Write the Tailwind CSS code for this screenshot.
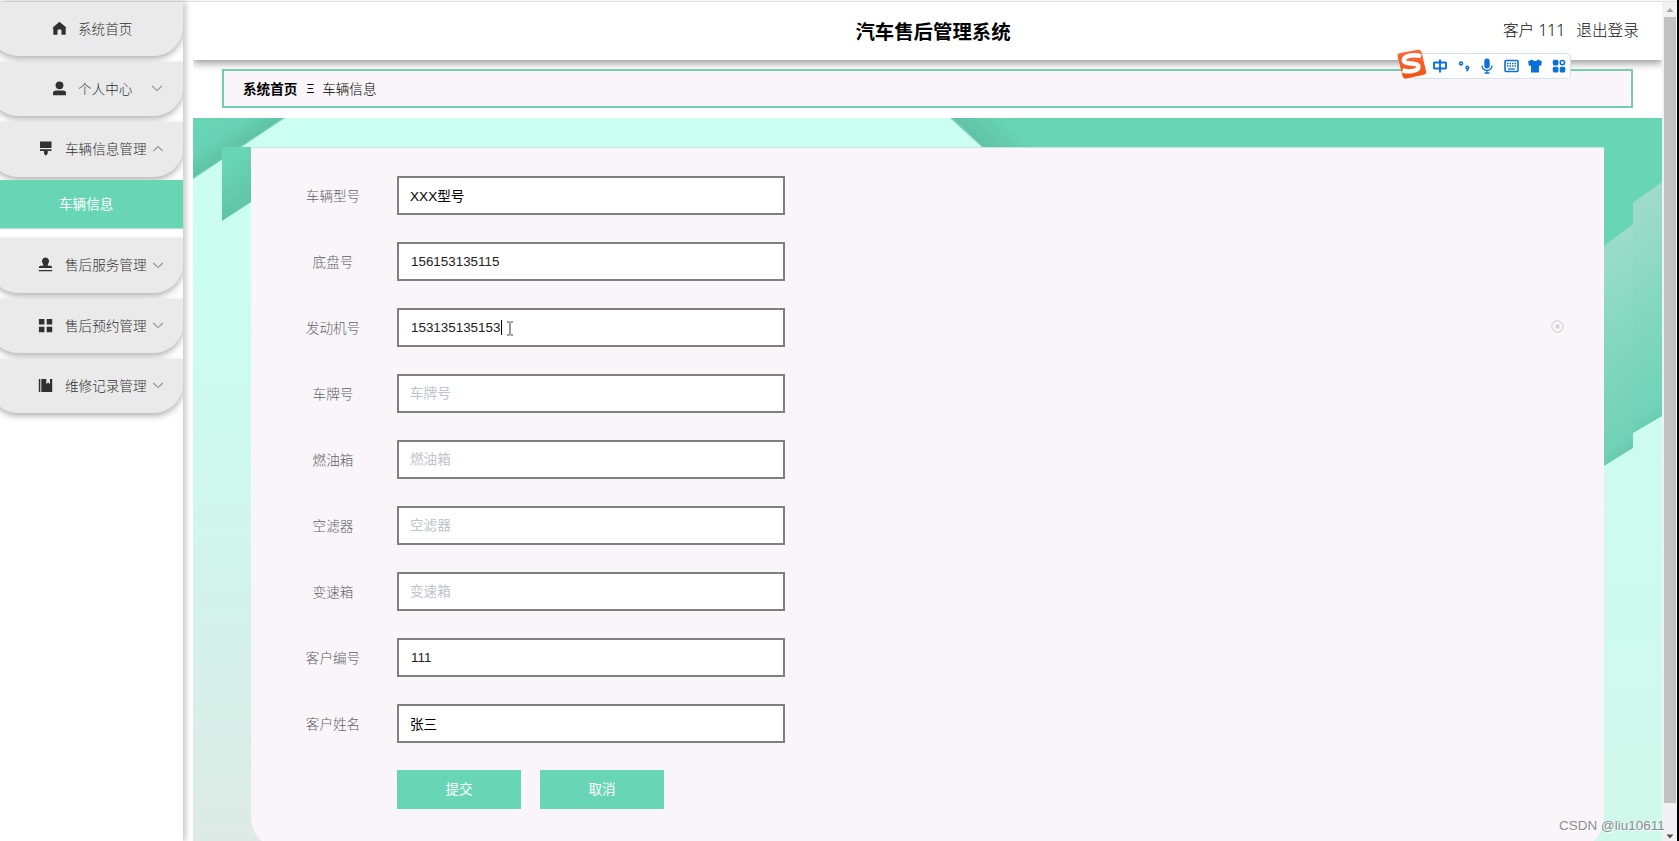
<!DOCTYPE html>
<html lang="zh">
<head>
  <meta charset="utf-8">
  <title>汽车售后管理系统</title>
  <meta name="viewport" content="width=device-width, initial-scale=1">
  <script src="https://cdn.jsdelivr.net/npm/@tailwindcss/browser@4"></script>
</head>

<body class="flex h-[841px] w-[1679px] overflow-hidden bg-white font-['Noto_Sans_CJK_SC',sans-serif] text-[13.6px] text-[#303133]">

  <!-- sidebar -->
  <aside class="relative z-10 mt-[2px] h-[839px] w-[183px] shrink-0 bg-white shadow-[3px_0_6px_rgba(0,0,0,0.22)]">
    <nav class="h-full overflow-hidden font-light">
      <div class="-ml-[11px] flex h-[54px] items-center rounded-b-[29px] bg-[#eaeaea] pb-[2px] pl-[63px] shadow-[0_3px_6px_rgba(0,0,0,0.3)]">
        <svg class="h-[15px] w-[15px]" viewBox="0 0 15 15" fill="#303133"><path d="M7.500.8 14.200 6.400V7.300H13.700V13.700H9.500V9.400a1 1 0 0 0-1-1h-2a1 1 0 0 0-1 1v4.300H1.300V7.300H.8V6.400z"/></svg>
        <span class="ml-[11px]">系统首页</span>
      </div>

      <div class="-ml-[11px] mt-[6px] flex h-[54px] items-center rounded-b-[29px] bg-[#eaeaea] pb-[2px] pl-[63px] shadow-[0_3px_6px_rgba(0,0,0,0.3)]">
        <svg class="h-[15px] w-[15px]" viewBox="0 0 15 15" fill="#303133"><circle cx="7.500" cy="4.300" r="3.900"/><path d="M1 14.300v-2.300Q1 9.500 4 9.500h7q3 0 3 2.500v2.300z"/></svg>
        <span class="ml-[11px]">个人中心</span>
        <svg class="ml-[19px] h-[10px] w-[12px]" viewBox="0 0 12 10" fill="none" stroke="#909399" stroke-width="1.100"><path d="M1.200 3 6 7.600 10.800 3"/></svg>
      </div>

      <div class="-ml-[11px] mt-[6px] flex h-[55px] items-center rounded-b-[29px] bg-[#eaeaea] pb-[2px] pl-[49px] shadow-[0_3px_6px_rgba(0,0,0,0.3)]">
        <svg class="h-[15px] w-[15px]" viewBox="0 0 15 15" fill="#303133"><path d="M2 .5h11.500V7H2zM2 8.200h11.500v1.700H9.700v2.900L7.800 14.800 6 12.800V9.900H2z"/></svg>
        <span class="ml-[12px]">车辆信息管理</span>
        <svg class="ml-[5px] h-[10px] w-[12px]" viewBox="0 0 12 10" fill="none" stroke="#909399" stroke-width="1.100"><path d="M1.200 7.200 6 2.600 10.800 7.200"/></svg>
      </div>

      <div class="relative mt-[3px] flex h-[49px] items-center border-b border-[#a9e5d3] bg-[#68d5b5] pb-[2px] pl-[59px] font-normal text-white">车辆信息</div>

      <div class="-ml-[11px] mt-[9px] flex h-[55px] items-center rounded-b-[29px] bg-[#eaeaea] pb-[2px] pl-[49px] shadow-[0_3px_6px_rgba(0,0,0,0.3)]">
        <svg class="h-[15px] w-[15px]" viewBox="0 0 15 15" fill="#303133"><path d="M7.500.6a3.500 3.500 0 0 1 3 5.400c-.6 1-.9 1.800-.8 2.800h2.800q1.700 0 1.700 2.200H.800q0-2.200 1.700-2.200h2.800c.1-1-.2-1.800-.8-2.800a3.500 3.500 0 0 1 3-5.400zM.8 12.900h13.400V14.200H.8z"/></svg>
        <span class="ml-[12px]">售后服务管理</span>
        <svg class="ml-[5px] h-[10px] w-[12px]" viewBox="0 0 12 10" fill="none" stroke="#909399" stroke-width="1.100"><path d="M1.200 3 6 7.600 10.800 3"/></svg>
      </div>

      <div class="-ml-[11px] mt-[6px] flex h-[54px] items-center rounded-b-[29px] bg-[#eaeaea] pb-[2px] pl-[49px] shadow-[0_3px_6px_rgba(0,0,0,0.3)]">
        <svg class="h-[15px] w-[15px]" viewBox="0 0 15 15" fill="#303133"><path d="M.9 1h5.500v5.500H.9zM8.700 1h5.500v5.500H8.700zM.9 8.700h5.500v5.500H.9zM8.700 8.700h5.500v5.500H8.700z"/></svg>
        <span class="ml-[12px]">售后预约管理</span>
        <svg class="ml-[5px] h-[10px] w-[12px]" viewBox="0 0 12 10" fill="none" stroke="#909399" stroke-width="1.100"><path d="M1.200 3 6 7.600 10.800 3"/></svg>
      </div>

      <div class="-ml-[11px] mt-[6px] flex h-[54px] items-center rounded-b-[29px] bg-[#eaeaea] pb-[2px] pl-[49px] shadow-[0_3px_6px_rgba(0,0,0,0.3)]">
        <svg class="h-[15px] w-[15px]" viewBox="0 0 15 15" fill="#303133"><path d="M.8 1h1.500v13H.8zM3.300 1h5v5l1.900-1.500L12 6V1h2.200v13H3.300z"/></svg>
        <span class="ml-[12px]">维修记录管理</span>
        <svg class="ml-[5px] h-[10px] w-[12px]" viewBox="0 0 12 10" fill="none" stroke="#909399" stroke-width="1.100"><path d="M1.200 3 6 7.600 10.800 3"/></svg>
      </div>
    </nav>
  </aside>

  <div class="ml-[10px] flex w-[1469px] shrink-0 flex-col overflow-hidden pt-[2px]">
    <header class="grid h-[58px] shrink-0 grid-cols-3 items-center bg-white pr-[23px] text-black shadow-[0_3px_8px_rgba(0,0,0,0.42)]">
      <div></div>
      <h1 class="pl-[34px] pb-px text-center text-[19.4px] font-bold">汽车售后管理系统</h1>
      <div class="flex justify-end gap-[11px] font-['Noto_Sans','Noto_Sans_CJK_SC',sans-serif] text-[15.7px] font-light text-[#111]">
        <span>客户 111</span>
        <span>退出登录</span>
      </div>
    </header>

    <!-- breadcrumb -->
    <div class="z-10 mx-[29px] mt-[9px] flex h-[39px] shrink-0 items-center border-2 border-[#76ccb3] bg-[#f9f5f9] pl-[19px] text-black">
      <span class="font-bold">系统首页</span>
      <span class="ml-[9px] mr-[8px] font-['Liberation_Sans',sans-serif] text-[12px]">Ξ</span>
      <span class="font-light">车辆信息</span>
    </div>

    <main class="relative mt-[10px] h-[723px] shrink-0">
      <!-- layered backdrop, the inner one repeats the outer one at a 29px inset -->
      <svg class="absolute inset-0 h-[723px] w-[1469px]" viewBox="0 0 1469 723">
        <defs>
          <linearGradient id="pale" x1="0" y1="0" x2="0" y2="1">
            <stop offset="0" stop-color="#cafff1"/><stop offset=".3" stop-color="#ccfcf0"/><stop offset=".6" stop-color="#d1f5eb"/><stop offset="1" stop-color="#deeae6"/>
          </linearGradient>
          <linearGradient id="paleRight" x1="0" y1="0" x2="0" y2="1">
            <stop offset="0" stop-color="#cafff1"/><stop offset="1" stop-color="#d0f8eb"/>
          </linearGradient>
          <linearGradient id="corner" gradientUnits="userSpaceOnUse" x1="10" y1="0" x2="36" y2="39">
            <stop offset="0" stop-color="#68d5b5"/><stop offset=".5" stop-color="#68d3b4"/><stop offset=".92" stop-color="#60c3a6"/><stop offset="1" stop-color="#82d9c0"/>
          </linearGradient>
          <linearGradient id="innerCorner" gradientUnits="userSpaceOnUse" x1="29" y1="50" x2="55" y2="89">
            <stop offset="0" stop-color="#68d5b5"/><stop offset="1" stop-color="#60c3a6"/>
          </linearGradient>
          <linearGradient id="top" gradientUnits="userSpaceOnUse" x1="771" y1="14" x2="797" y2="-13">
            <stop offset="0" stop-color="#80d8bf"/><stop offset=".1" stop-color="#61c2a6"/><stop offset="1" stop-color="#68d5b5"/>
          </linearGradient>
          <linearGradient id="band" gradientUnits="userSpaceOnUse" x1="1400" y1="111" x2="1510" y2="275">
            <stop offset="0" stop-color="#a0dbcb"/><stop offset=".45" stop-color="#86d8c0"/><stop offset=".92" stop-color="#70d3b7"/><stop offset="1" stop-color="#67c9ad"/>
          </linearGradient>
          <linearGradient id="innerBand" gradientUnits="userSpaceOnUse" x1="1372" y1="154" x2="1478" y2="306">
            <stop offset="0" stop-color="#9cdccb"/><stop offset=".45" stop-color="#84d8bf"/><stop offset=".92" stop-color="#72d1b6"/><stop offset="1" stop-color="#69c9ae"/>
          </linearGradient>
        </defs>
        <path d="M0 0H735V723H0z" fill="url(#pale)"/>
        <path d="M735 0H1469V723H735z" fill="url(#paleRight)"/>
        <path d="M0 0H92L0 61z" fill="url(#corner)"/>
        <path d="M29 29H58V84L29 103z" fill="url(#innerCorner)"/>
        <path d="M757 0H1469V150H909L789 29z" fill="url(#top)"/>
        <path d="M1411 29H1440V106L1411 128z" fill="#68d5b5"/>
        <path d="M1440 85 1469 64V298L1440 315z" fill="url(#band)"/>
        <path d="M1411 128 1440 106V330L1411 348z" fill="url(#innerBand)"/>
      </svg>

      <!-- form card -->
      <form class="relative mx-[58px] mt-[29px] flex h-[701px] w-[1353px] flex-col rounded-b-[30px] border-t border-[#c5e6dd] bg-[#f9f5f9] pt-[28px] text-[#606266]">
        <div class="mb-[27px] flex h-[39px] items-center">
          <label class="w-[164px] text-center font-light">车辆型号</label>
          <input type="text" value="XXX型号" class="ml-[-18px] h-[39px] w-[388px] border-2 border-[#7f7f7f] bg-white px-[11px] pb-px font-['Liberation_Sans','Noto_Sans_CJK_SC',sans-serif] text-black">
        </div>
        <div class="mb-[27px] flex h-[39px] items-center">
          <label class="w-[164px] text-center font-light">底盘号</label>
          <input type="text" value="156153135115" class="ml-[-18px] h-[39px] w-[388px] border-2 border-[#7f7f7f] bg-white px-[12px] font-['Liberation_Sans','Noto_Sans_CJK_SC',sans-serif] text-[13.4px] text-[#222]">
        </div>
        <div class="relative mb-[27px] flex h-[39px] items-center">
          <label class="w-[164px] text-center font-light">发动机号</label>
          <input type="text" value="153135135153" class="ml-[-18px] h-[39px] w-[388px] border-2 border-[#7f7f7f] bg-white px-[12px] font-['Liberation_Sans','Noto_Sans_CJK_SC',sans-serif] text-[13.4px] text-[#222]">
          <!-- caret and text pointer -->
          <i class="absolute left-[250px] top-[12px] h-[15px] w-px bg-black"></i>
          <svg class="absolute left-[255px] top-[13px] h-[15px] w-[8px]" viewBox="0 0 8 15" fill="none" stroke="#333"><path d="M1 1H3.500M4.500 1H7M4 1.500V13.500M1 14H3.500M4.500 14H7"/></svg>
          <svg class="ml-auto mr-[40px] mb-[2px] h-[13px] w-[13px]" viewBox="0 0 13 13" fill="none" stroke="#c6c8ce"><circle cx="6.500" cy="6.500" r="5.700"/><path d="m4.700 4.700 3.600 3.600m0-3.600-3.600 3.600" stroke-width="1.300"/></svg>
        </div>
        <div class="mb-[27px] flex h-[39px] items-center">
          <label class="w-[164px] text-center font-light">车牌号</label>
          <input type="text" placeholder="车牌号" class="ml-[-18px] h-[39px] w-[388px] border-2 border-[#7f7f7f] bg-white px-[11px] pb-[3px] placeholder:text-[#c0c4cc]">
        </div>
        <div class="mb-[27px] flex h-[39px] items-center">
          <label class="w-[164px] text-center font-light">燃油箱</label>
          <input type="text" placeholder="燃油箱" class="ml-[-18px] h-[39px] w-[388px] border-2 border-[#7f7f7f] bg-white px-[11px] pb-[3px] placeholder:text-[#c0c4cc]">
        </div>
        <div class="mb-[27px] flex h-[39px] items-center">
          <label class="w-[164px] text-center font-light">空滤器</label>
          <input type="text" placeholder="空滤器" class="ml-[-18px] h-[39px] w-[388px] border-2 border-[#7f7f7f] bg-white px-[11px] pb-[3px] placeholder:text-[#c0c4cc]">
        </div>
        <div class="mb-[27px] flex h-[39px] items-center">
          <label class="w-[164px] text-center font-light">变速箱</label>
          <input type="text" placeholder="变速箱" class="ml-[-18px] h-[39px] w-[388px] border-2 border-[#7f7f7f] bg-white px-[11px] pb-[3px] placeholder:text-[#c0c4cc]">
        </div>
        <div class="mb-[27px] flex h-[39px] items-center">
          <label class="w-[164px] text-center font-light">客户编号</label>
          <input type="text" value="111" class="ml-[-18px] h-[39px] w-[388px] border-2 border-[#7f7f7f] bg-white px-[12px] font-['Liberation_Sans','Noto_Sans_CJK_SC',sans-serif] text-[13.4px] text-[#222]">
        </div>
        <div class="mb-[27px] flex h-[39px] items-center">
          <label class="w-[164px] text-center font-light">客户姓名</label>
          <input type="text" value="张三" class="ml-[-18px] h-[39px] w-[388px] border-2 border-[#7f7f7f] bg-white px-[11px] pb-px text-black">
        </div>
        <div class="flex gap-[19px] pl-[146px]">
          <button type="button" class="h-[39px] w-[124px] bg-[#68d5b5] pb-[2px] text-white">提交</button>
          <button type="button" class="h-[39px] w-[124px] bg-[#68d5b5] pb-[2px] text-white">取消</button>
        </div>
      </form>
    </main>
  </div>

  <!-- scrollbar -->
  <div class="mt-[2px] flex h-[839px] w-[15px] shrink-0 flex-col items-center bg-[#f1f0f3]">
    <svg class="h-[15px] w-[15px] shrink-0" viewBox="0 0 15 15" fill="#a3a3a3"><path d="M4.500 10 8 6l3.500 4z"/></svg>
    <div class="ml-px h-[786px] w-[12px] shrink-0 bg-[#c1c1c1]"></div>
    <svg class="mt-auto mb-px h-[7px] w-[15px] shrink-0" viewBox="0 0 15 7" fill="#505050"><path d="M4.500 1.500h7L8 5.500z"/></svg>
  </div>
  <div class="w-[2px] shrink-0 bg-black"></div>

  <!-- browser edge line above the page -->
  <div class="absolute left-0 top-0 h-[2px] w-[1677px] border-b border-[#e2e2e2] bg-[#f6f6f6]"></div>

  <!-- input method toolbar -->
  <div class="absolute left-[1410px] top-[53px] z-20 flex h-[26px] w-[161px] items-center rounded-sm border border-[#d5dfec] bg-white">
    <svg class="absolute -left-[15px] -top-[5px] h-[31px] w-[31px]" viewBox="0 0 31 31">
      <defs><linearGradient id="logo" x1="0" y1="0" x2="0" y2="1"><stop offset="0" stop-color="#fb6b3b"/><stop offset="1" stop-color="#f4500f"/></linearGradient></defs>
      <path d="M4 4 22 .8q3-.5 3.700 2.500L30 22q.7 3-2.200 3.800L10.500 29.500q-3 .7-3.800-2.300L1.700 8Q1 4.700 4 4z" fill="url(#logo)"/>
      <path d="M25 7.200C17 5 8 6.800 7.800 11.300 7.700 16 22.300 13 22.500 17.500 22.700 21.800 14 23.500 6.500 21.500" fill="none" stroke="#fff" stroke-width="4.400"/>
    </svg>
    <div class="flex w-full items-center justify-between pl-[22px] pr-[4px]">
      <svg class="h-[14px] w-[14px]" viewBox="0 0 14 14" fill="none" stroke="#0b70d8" stroke-width="1.900"><rect x="1" y="3.500" width="12" height="6" rx=".5"/><path d="M7 .5V13.500"/></svg>
      <svg class="h-[14px] w-[14px]" viewBox="0 0 14 14" fill="none" stroke="#0b70d8" stroke-width="1.500"><circle cx="4" cy="4.500" r="1.500"/><path d="M10.400 7.200a1.300 1.300 0 1 1-.1 0zM11.400 8.500q.2 2.500-2 3.700"/></svg>
      <svg class="h-[16px] w-[14px]" viewBox="0 0 14 16"><rect x="4.300" y=".5" width="5.400" height="10" rx="2.700" fill="#0b70d8"/><path d="M2 7.500a5 5 0 0 0 10 0M7 12.500V15M4.500 15h5" fill="none" stroke="#0b70d8" stroke-width="1.300"/></svg>
      <svg class="h-[14px] w-[15px]" viewBox="0 0 15 14" fill="none" stroke="#0b70d8"><rect x="1" y="1.500" width="13" height="11" rx="1" stroke-width="1.600"/><path d="M3 4.500h9M3 7h9" stroke-width="1.300" stroke-dasharray="1.500 1"/><path d="M4 10h7" stroke-width="1.300"/></svg>
      <svg class="h-[14px] w-[14px]" viewBox="0 0 14 14" fill="#0b70d8"><path d="M4 .5Q7 3.500 10 .5l3.800 1.700-.5 4.300-2.300.3V13.500H3V6.800L.7 6.500.2 2.200z"/></svg>
      <svg class="h-[14px] w-[14px]" viewBox="0 0 14 14" fill="#0b70d8"><rect x=".8" y=".8" width="5.600" height="5.600" rx="1.500"/><circle cx="10.400" cy="3.600" r="2.200" fill="none" stroke="#0b70d8" stroke-width="1.500"/><rect x=".8" y="7.800" width="5.600" height="5.600" rx="1.500"/><rect x="7.700" y="7.800" width="5.600" height="5.600" rx="1.500"/></svg>
    </div>
  </div>

  <!-- watermark -->
  <div class="absolute left-[1559px] top-[817px] z-20 whitespace-nowrap font-['Liberation_Sans',sans-serif] text-[13.5px] leading-[18px] text-[#8c8c90] [text-shadow:1px_1px_0_#fff]">CSDN @liu10611</div>
</body>
</html>
